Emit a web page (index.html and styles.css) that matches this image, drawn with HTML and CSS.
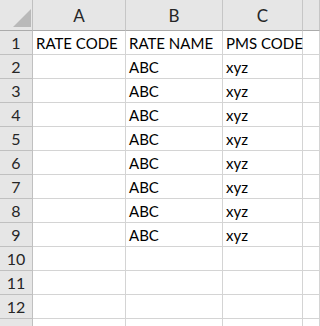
FILE: index.html
```html
<!DOCTYPE html>
<html lang="en">
<head>
  <meta charset="UTF-8">
  <meta name="viewport" content="width=device-width, initial-scale=1.0">
  <title>Rate codes</title>
  <link rel="stylesheet" href="styles.css">
</head>
<body>

<div class="sheet">
  <!-- column headers -->
  <div class="corner">
    <svg width="32" height="30" viewBox="0 0 32 30"><polygon points="13,27 31,27 31,9" fill="#b9b9b9"/></svg>
  </div>
  <div class="col-head">A</div>
  <div class="col-head">B</div>
  <div class="col-head">C</div>
  <div class="col-head"></div>

  <div class="row-head">1</div>
  <div class="cell">RATE CODE</div>
  <div class="cell">RATE NAME</div>
  <div class="cell">PMS CODE</div>
  <div class="cell"></div>

  <div class="row-head">2</div><div class="cell"></div><div class="cell">ABC</div><div class="cell">xyz</div><div class="cell"></div>
  <div class="row-head">3</div><div class="cell"></div><div class="cell">ABC</div><div class="cell">xyz</div><div class="cell"></div>
  <div class="row-head">4</div><div class="cell"></div><div class="cell">ABC</div><div class="cell">xyz</div><div class="cell"></div>
  <div class="row-head">5</div><div class="cell"></div><div class="cell">ABC</div><div class="cell">xyz</div><div class="cell"></div>
  <div class="row-head">6</div><div class="cell"></div><div class="cell">ABC</div><div class="cell">xyz</div><div class="cell"></div>
  <div class="row-head">7</div><div class="cell"></div><div class="cell">ABC</div><div class="cell">xyz</div><div class="cell"></div>
  <div class="row-head">8</div><div class="cell"></div><div class="cell">ABC</div><div class="cell">xyz</div><div class="cell"></div>
  <div class="row-head">9</div><div class="cell"></div><div class="cell">ABC</div><div class="cell">xyz</div><div class="cell"></div>
  <div class="row-head">10</div><div class="cell"></div><div class="cell"></div><div class="cell"></div><div class="cell"></div>
  <div class="row-head">11</div><div class="cell"></div><div class="cell"></div><div class="cell"></div><div class="cell"></div>
  <div class="row-head">12</div><div class="cell"></div><div class="cell"></div><div class="cell"></div><div class="cell"></div>
  <div class="row-head"></div><div class="cell"></div><div class="cell"></div><div class="cell"></div><div class="cell"></div>
</div>

</body>
</html>
```

FILE: styles.css
```css
body {
    margin: 0;
    background-color: #fff;
    font-family: Lato, 'Liberation Sans', Arial, sans-serif;
}
.sheet {
    display: grid;
    grid-template-columns: 33px 93px 97px 80px 1fr;
    grid-template-rows: 31px repeat(13, 24px);
    width: 320px;
    height: 326px;
    overflow: hidden;
}
.corner {
    background-color: #e6e6e6;
    border-right: 1px solid #c0c0c0;
    border-bottom: 1px solid #ababab;
    box-sizing: border-box;
}
.corner svg {
    display: block;
}
.col-head {
    background-color: #e6e6e6;
    border-right: 1px solid #c6c6c6;
    border-bottom: 1px solid #ababab;
    box-sizing: border-box;
    display: flex;
    align-items: flex-end;
    justify-content: center;
    padding-bottom: 4px;
    font-size: 17px;
    color: #262626;
}
.row-head {
    background-color: #e6e6e6;
    border-right: 1px solid #c0c0c0;
    border-bottom: 1px solid #c0c0c0;
    box-sizing: border-box;
    display: flex;
    align-items: flex-end;
    justify-content: center;
    padding-bottom: 2px;
    font-size: 16px;
    color: #262626;
}
.cell {
    border-right: 1px solid #d4d4d4;
    border-bottom: 1px solid #d4d4d4;
    box-sizing: border-box;
    display: flex;
    align-items: flex-end;
    padding: 0 0 2px 3px;
    font-size: 15px;
    color: #000;
    white-space: nowrap;
}
```
